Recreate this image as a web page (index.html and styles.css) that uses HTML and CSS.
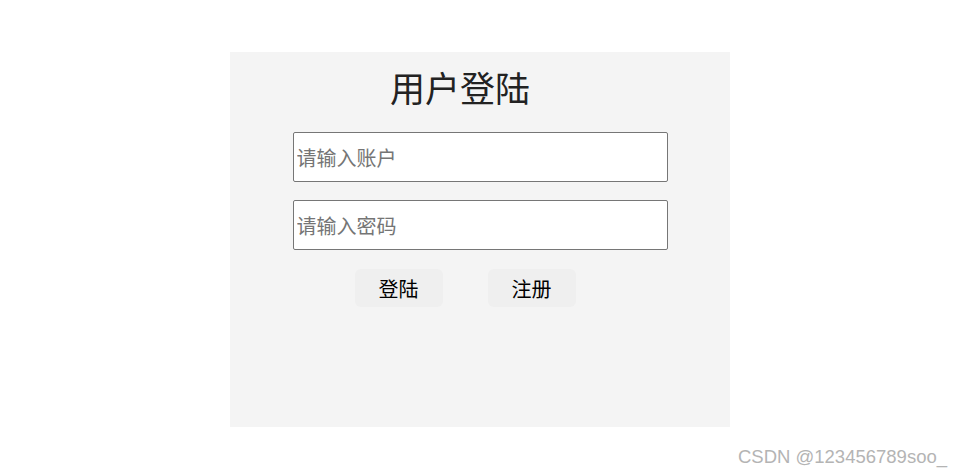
FILE: index.html
```html
<!DOCTYPE html>
<html lang="zh-CN">
<head>
    <meta charset="UTF-8">
    <title>用户登陆</title>
    <link rel="stylesheet" href="styles.css">
</head>
<body>
    <div class="login-box">
        <h2>用户登陆</h2>
        <input type="text" class="field" placeholder="请输入账户">
        <input type="password" class="field" placeholder="请输入密码">
        <div class="actions">
            <button class="btn">登陆</button>
            <button class="btn">注册</button>
        </div>
    </div>
    <div class="watermark">CSDN @123456789soo_</div>
</body>
</html>
```

FILE: styles.css
```css
body {
    margin: 0;
    background-color: #ffffff;
    font-family: "Microsoft YaHei", "Noto Sans CJK SC", sans-serif;
    width: 963px;
    height: 476px;
    position: relative;
    overflow: hidden;
}

.login-box {
    width: 500px;
    height: 375px;
    margin: 52px 0 0 230px;
    background-color: #f4f4f4;
    display: flex;
    flex-direction: column;
    align-items: center;
    box-sizing: border-box;
    padding-top: 12px;
}

h2 {
    margin: 0 40px 22px 0;
    font-size: 35px;
    font-weight: normal;
    line-height: 46px;
    color: #222;
}

.field {
    width: 375px;
    height: 50px;
    box-sizing: border-box;
    border: 1px solid #767676;
    border-radius: 2px;
    padding: 0 3px;
    margin-bottom: 18px;
    font-size: 20px;
    font-family: "Noto Sans CJK SC", sans-serif;
    background-color: #fff;
}

.field::placeholder {
    color: #757575;
}

.actions {
    display: flex;
    gap: 45px;
    margin: 1px 30px 0 0;
}

.btn {
    width: 88px;
    height: 38px;
    border: none;
    border-radius: 6px;
    background-color: #efefef;
    font-size: 20px;
    font-family: "Noto Sans CJK SC", sans-serif;
    color: #000;
    padding: 0;
}

.watermark {
    position: absolute;
    right: 16px;
    bottom: 8px;
    font-family: "Liberation Sans", Arial, sans-serif;
    font-size: 18.5px;
    color: #b4b4b4;
}
```
